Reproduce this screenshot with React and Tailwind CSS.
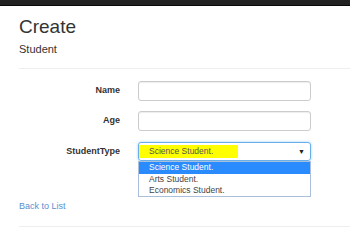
import React from "react";

const Row = ({ label, className = "", children }) => (
  <div className={`flex items-center ${className}`}>
    <label className="w-[101px] text-right text-[9px] font-bold text-[#333]">
      {label}
    </label>
    <div className="ml-[18px] w-[173px]">{children}</div>
  </div>
);

const App = () => {
  const options = ["Science Student.", "Arts Student.", "Economics Student."];

  return (
    <div className="w-[350px] h-[230px] overflow-hidden bg-white text-[#333] font-['Liberation_Sans',Arial,sans-serif]">
      <div className="h-[6px] bg-[#222] border-b border-[#080808]" />
      <div className="pl-[19px]">
        <h2 className="mt-[11px] text-[19px] leading-[20px]">Create</h2>
        <h4 className="mt-[6px] text-[11px] leading-[13px]">Student</h4>
        <hr className="mt-[12px] border-0 border-t border-[#eee]" />

        <form className="mt-[12px]">
          <Row label="Name">
            <input className="block w-full h-[20px] border border-[#ccc] rounded-[3px] shadow-[inset_0_1px_1px_rgba(0,0,0,0.075)]" />
          </Row>
          <Row label="Age" className="mt-[10px]">
            <input className="block w-full h-[20px] border border-[#ccc] rounded-[3px] shadow-[inset_0_1px_1px_rgba(0,0,0,0.075)]" />
          </Row>
          <Row label="StudentType" className="mt-[11px]">
            <div className="relative">
              <div className="flex items-center h-[19px] border border-[#66afe9] rounded-[3px] shadow-[0_0_3px_rgba(102,175,233,0.6)]">
                <span className="ml-[0px] w-[99px] h-[13px] bg-[#ffff00] pl-[10px] text-[8.5px] leading-[13px] text-[#555]">
                  {options[0]}
                </span>
                <span className="ml-auto mr-[5px] text-[7px] leading-none text-[#222]">▼</span>
              </div>
              <ul className="absolute left-0 top-full w-full bg-white border border-[#a9bfdc] text-[8.5px] leading-[11px] text-[#444]">
                {options.map((o, i) => (
                  <li
                    key={o}
                    className={
                      i === 0
                        ? "pl-[10px] h-[12px] bg-[#2a8bff] text-white"
                        : "pl-[10px] h-[11px]"
                    }
                  >
                    {o}
                  </li>
                ))}
              </ul>
            </div>
          </Row>
        </form>

        <a className="block mt-[40px] text-[9px] leading-[11px] text-[#5b8fd0]">Back to List</a>
        <hr className="mt-[14px] border-0 border-t border-[#eee]" />
      </div>
    </div>
  );
};

export default App;
